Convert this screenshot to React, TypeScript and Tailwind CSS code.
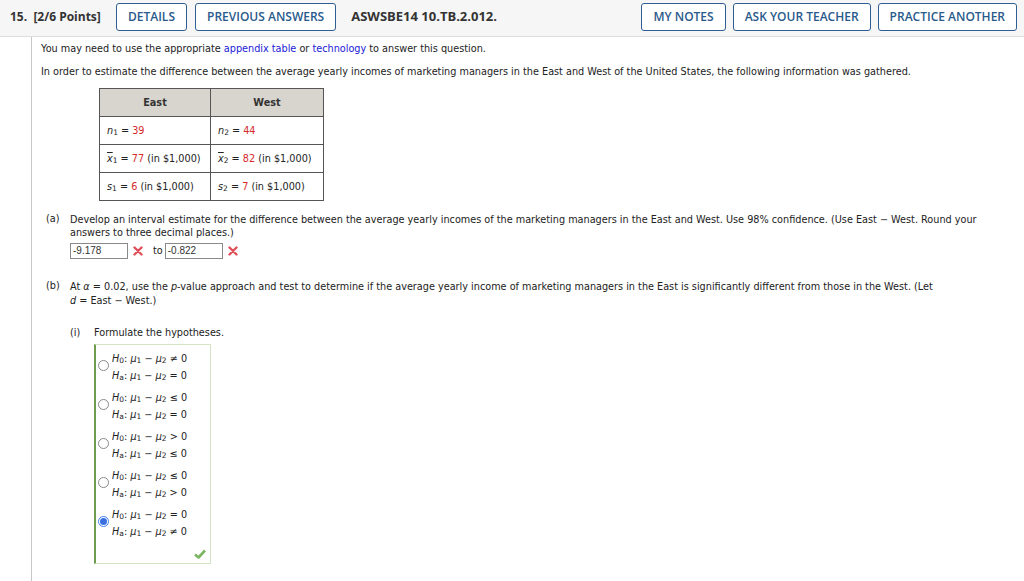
import React from "react";

const OS = { fontFamily: '"Open Sans", "Noto Sans", sans-serif' };

function Btn({ children }: { children: React.ReactNode }) {
  return (
    <div
      className="h-[28px] px-[11px] flex items-center border border-[#2f5f92] rounded-[3px] text-[#2a5a8c] text-[12px] font-semibold bg-white whitespace-nowrap"
      style={OS}
    >
      {children}
    </div>
  );
}

function Sub({ c }: { c: string }) {
  return <sub className="text-[7.5px] relative top-[1px]">{c}</sub>;
}

function Hyp({ h0, ha, checked }: { h0: string; ha: string; checked?: boolean }) {
  return (
    <div className="flex items-center h-[39px]">
      <div className="w-[16px] shrink-0 flex justify-start pl-[2px] -mt-[2px]">
        {checked ? (
          <div className="w-[11px] h-[11px] rounded-full border border-[#3b82f6] flex items-center justify-center">
            <div className="w-[7px] h-[7px] rounded-full bg-[#3b6fe0]" />
          </div>
        ) : (
          <div className="w-[11px] h-[11px] rounded-full border border-[#8a8a8a] bg-white" />
        )}
      </div>
      <div className="flex flex-col leading-[17px]">
        <div>
          <i>H</i><Sub c="0" />: <i>μ</i><Sub c="1" /> − <i>μ</i><Sub c="2" /> {h0} 0
        </div>
        <div>
          <i>H</i><Sub c="a" />: <i>μ</i><Sub c="1" /> − <i>μ</i><Sub c="2" /> {ha} 0
        </div>
      </div>
    </div>
  );
}

function XMark() {
  return (
    <svg width="10" height="10" viewBox="0 0 10 10">
      <path d="M1.5 1.5 L8.5 8.5 M8.5 1.5 L1.5 8.5" stroke="#e0505a" strokeWidth="2.4" strokeLinecap="round" />
    </svg>
  );
}

export default function App() {
  const red = "text-[#d42a2a]";
  return (
    <div className="w-[1024px] h-[581px] bg-white overflow-hidden text-[#222]">
      <div className="h-[37px] bg-[#f6f6f6] border-b border-[#dedede] flex items-start pt-[3px] pl-[10px] pr-[7px]">
        <div className="h-[28px] flex items-center text-[12px] font-bold text-[#333] w-[106px]" style={OS}>
          15.&nbsp; [2/6 Points]
        </div>
        <div className="flex gap-[8px]">
          <Btn>DETAILS</Btn>
          <Btn>PREVIOUS ANSWERS</Btn>
        </div>
        <div className="h-[28px] flex items-center ml-[15px] text-[13px] font-bold text-[#333]" style={OS}>
          ASWSBE14 10.TB.2.012.
        </div>
        <div className="ml-auto flex gap-[7px]">
          <Btn>MY NOTES</Btn>
          <Btn>ASK YOUR TEACHER</Btn>
          <Btn>PRACTICE ANOTHER</Btn>
        </div>
      </div>

      <div className="flex h-[544px]">
        <div className="w-[32px] border-r border-[#c8c8c8]" />
        <div className="pl-[9px] text-[9.7px] leading-[12px] font-['DejaVu_Sans','Verdana',sans-serif]">
          <div className="mt-[6px] h-[12px]">
            You may need to use the appropriate <span className="text-[#1a1ad6]">appendix table</span> or{" "}
            <span className="text-[#1a1ad6]">technology</span> to answer this question.
          </div>
          <div className="mt-[11px] h-[12px] whitespace-nowrap">
            In order to estimate the difference between the average yearly incomes of marketing managers in the East and West of the United States, the following information was gathered.
          </div>

          <table className="mt-[10px] ml-[58px] border-collapse border border-[#555]">
            <thead>
              <tr className="bg-[#d8d5ce] h-[28px]">
                <th className="w-[111px] border border-[#555] font-bold text-[#333]">East</th>
                <th className="w-[113px] border border-[#555] font-bold text-[#333]">West</th>
              </tr>
            </thead>
            <tbody>
              <tr className="h-[28px]">
                <td className="border border-[#555] pl-[7px]">
                  <i>n</i><Sub c="1" /> = <span className={red}>39</span>
                </td>
                <td className="border border-[#555] pl-[7px]">
                  <i>n</i><Sub c="2" /> = <span className={red}>44</span>
                </td>
              </tr>
              <tr className="h-[28px]">
                <td className="border border-[#555] pl-[7px] whitespace-nowrap">
                  <span className="overline"><i>x</i></span><Sub c="1" /> = <span className={red}>77</span> (in $1,000)
                </td>
                <td className="border border-[#555] pl-[7px] whitespace-nowrap">
                  <span className="overline"><i>x</i></span><Sub c="2" /> = <span className={red}>82</span> (in $1,000)
                </td>
              </tr>
              <tr className="h-[28px]">
                <td className="border border-[#555] pl-[7px] whitespace-nowrap">
                  <i>s</i><Sub c="1" /> = <span className={red}>6</span> (in $1,000)
                </td>
                <td className="border border-[#555] pl-[7px] whitespace-nowrap">
                  <i>s</i><Sub c="2" /> = <span className={red}>7</span> (in $1,000)
                </td>
              </tr>
            </tbody>
          </table>

          <div className="mt-[12px] flex">
            <div className="w-[29px] pl-[5px]">(a)</div>
            <div className="w-[915px]">
              <div className="leading-[13px]">
                Develop an interval estimate for the difference between the average yearly incomes of the marketing managers in the East and West. Use 98% confidence. (Use East − West. Round your answers to three decimal places.)
              </div>
              <div className="mt-[3px] flex items-center h-[17px]">
                <div className="w-[58px] h-[16px] border border-[#8a8a8a] flex items-center pl-[2px] text-[10px] text-[#333] font-['Liberation_Sans',Arial,sans-serif]">
                  -9.178
                </div>
                <div className="ml-[5px]"><XMark /></div>
                <div className="ml-[10px] mr-[2px]">to</div>
                <div className="w-[58px] h-[16px] border border-[#8a8a8a] flex items-center pl-[2px] text-[10px] text-[#333] font-['Liberation_Sans',Arial,sans-serif]">
                  -0.822
                </div>
                <div className="ml-[5px]"><XMark /></div>
              </div>
            </div>
          </div>

          <div className="mt-[21px] flex">
            <div className="w-[29px] pl-[5px]">(b)</div>
            <div className="w-[915px] leading-[14px]">
              At <i>α</i> = 0.02, use the <i>p</i>-value approach and test to determine if the average yearly income of marketing managers in the East is significantly different from those in the West. (Let
              <br />
              <i>d</i> = East − West.)
            </div>
          </div>

          <div className="mt-[19px] flex ml-[29px]">
            <div className="w-[24px]">(i)</div>
            <div>Formulate the hypotheses.</div>
          </div>

          <div className="ml-[53px] mt-[5px] w-[117px] h-[220px] border border-[#d3e4c4] border-l-[#6d9c4f] border-l-[2px] pt-[2px] relative">
            <Hyp h0="≠" ha="=" />
            <Hyp h0="≤" ha="=" />
            <Hyp h0=">" ha="≤" />
            <Hyp h0="≤" ha=">" />
            <Hyp h0="=" ha="≠" checked />
            <svg className="absolute right-[4px] bottom-[4px]" width="12" height="10" viewBox="0 0 12 10">
              <path d="M1 5.5 L4.5 8.5 L11 1.5" stroke="#7bb661" strokeWidth="2.6" fill="none" strokeLinejoin="round" />
            </svg>
          </div>
        </div>
      </div>
    </div>
  );
}
